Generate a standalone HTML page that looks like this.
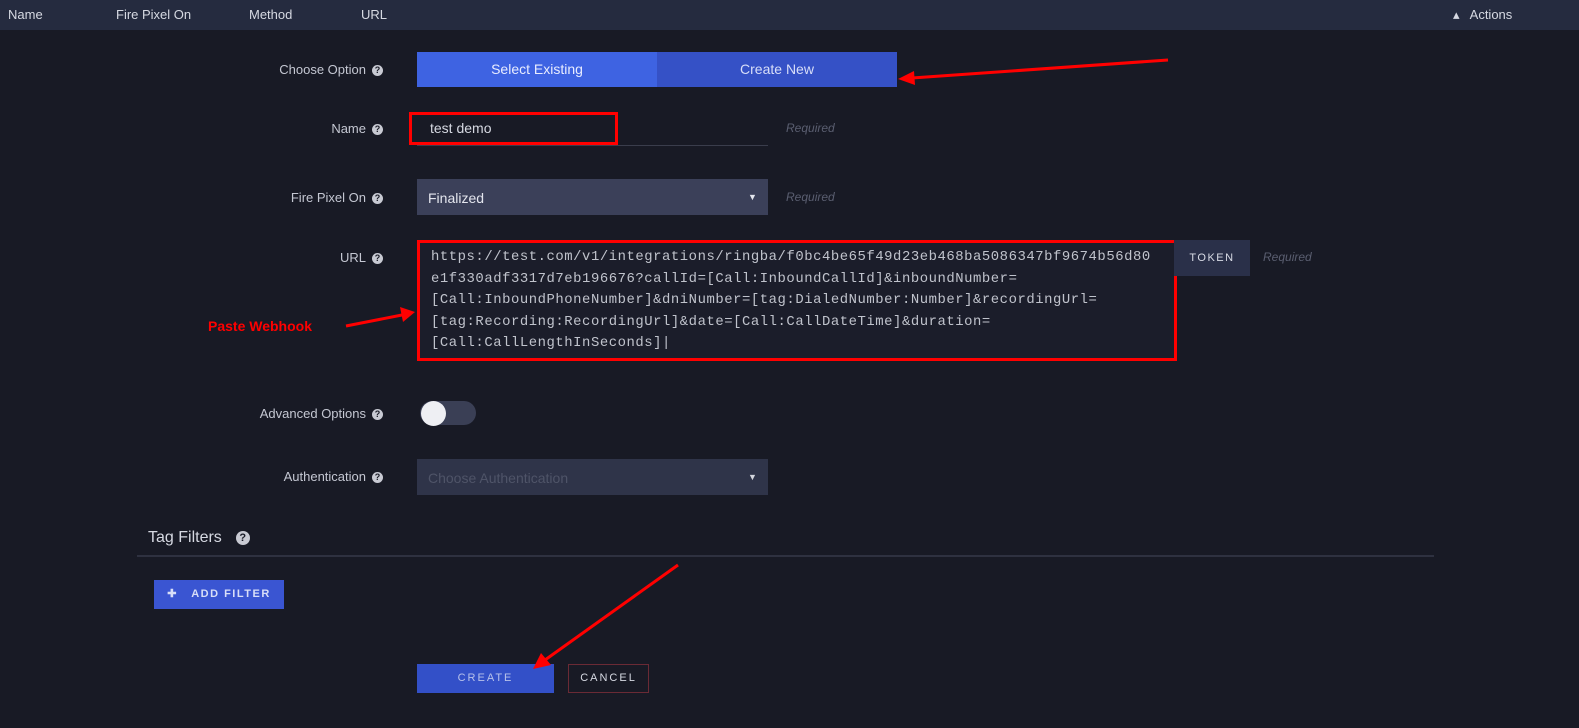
<!DOCTYPE html>
<html><head><style>
body{margin:0;width:1579px;height:728px;background:#181a25;font-family:"Liberation Sans",sans-serif;position:relative;overflow:hidden;color:#d0d3de}
.a{position:absolute}
.lbl{position:absolute;font-size:13px;color:#c4c7d2;text-align:right;width:300px}
.q{display:inline-block;width:11px;height:11px;border-radius:50%;background:#c8cad3;color:#181a25;font-size:9px;font-weight:bold;text-align:center;line-height:11px;margin-left:6px;vertical-align:1px}
.req{position:absolute;font-size:12px;font-style:italic;color:#5a5e70}
.mono{font-family:"Liberation Mono",monospace;font-size:13.9px;letter-spacing:0.55px;color:#c0c3cc;line-height:21.5px;white-space:nowrap}
</style></head><body>
<div class="a" style="left:0;top:0;width:1579px;height:30px;background:#252b3f"></div>
<div class="a" style="left:8px;top:7px;font-size:13px;color:#d6d9e2">Name</div>
<div class="a" style="left:116px;top:7px;font-size:13px;color:#d6d9e2">Fire Pixel On</div>
<div class="a" style="left:249px;top:7px;font-size:13px;color:#d6d9e2">Method</div>
<div class="a" style="left:361px;top:7px;font-size:13px;color:#d6d9e2">URL</div>
<div class="a" style="left:1453px;top:7px;font-size:13px;color:#d6d9e2">▴&nbsp;&nbsp; Actions</div>

<div class="lbl" style="left:83px;top:62px">Choose Option<span class="q">?</span></div>
<div class="a" style="left:417px;top:52px;width:240px;height:35px;background:#3e63e2;color:#e8ecff;font-size:14px;text-align:center;line-height:35px">Select Existing</div>
<div class="a" style="left:657px;top:52px;width:240px;height:35px;background:#3551c6;color:#d8def8;font-size:14px;text-align:center;line-height:35px">Create New</div>

<div class="lbl" style="left:83px;top:121px">Name<span class="q">?</span></div>
<div class="a" style="left:417px;top:145px;width:351px;height:1px;background:#3a3d4c"></div>
<div class="a" style="left:409px;top:112px;width:203px;height:27px;border:3px solid #f00"></div>
<div class="a" style="left:430px;top:120px;font-size:14px;color:#d6d9e2">test demo</div>
<div class="req" style="left:786px;top:121px">Required</div>

<div class="lbl" style="left:83px;top:190px">Fire Pixel On<span class="q">?</span></div>
<div class="a" style="left:417px;top:179px;width:351px;height:36px;background:#3b4059"></div>
<div class="a" style="left:428px;top:190px;font-size:14px;color:#e4e6ee">Finalized</div>
<div class="a" style="left:748px;top:192px;font-size:9px;color:#e4e6ee">▼</div>
<div class="req" style="left:786px;top:190px">Required</div>

<div class="lbl" style="left:83px;top:250px">URL<span class="q">?</span></div>
<div class="a" style="left:417px;top:240px;width:754px;height:115px;border:3px solid #f00;background:#1b1d2a"></div>
<div class="a mono" style="left:431px;top:247px">https://test.com/v1/integrations/ringba/f0bc4be65f49d23eb468ba5086347bf9674b56d80<br>e1f330adf3317d7eb196676?callId=[Call:InboundCallId]&amp;inboundNumber=<br>[Call:InboundPhoneNumber]&amp;dniNumber=[tag:DialedNumber:Number]&amp;recordingUrl=<br>[tag:Recording:RecordingUrl]&amp;date=[Call:CallDateTime]&amp;duration=<br>[Call:CallLengthInSeconds]|</div>
<div class="a" style="left:1174px;top:240px;width:76px;height:36px;background:#2a3049;color:#d8dbe5;font-size:11px;letter-spacing:1.5px;text-align:center;line-height:36px">TOKEN</div>
<div class="req" style="left:1263px;top:250px">Required</div>

<div class="a" style="left:208px;top:318px;font-size:14px;color:#f00;font-weight:bold">Paste Webhook</div>

<div class="lbl" style="left:83px;top:406px">Advanced Options<span class="q">?</span></div>
<div class="a" style="left:420px;top:401px;width:56px;height:24px;border-radius:12px;background:#3a3f55"></div>
<div class="a" style="left:421px;top:401px;width:25px;height:25px;border-radius:50%;background:#eeeff3"></div>

<div class="lbl" style="left:83px;top:469px">Authentication<span class="q">?</span></div>
<div class="a" style="left:417px;top:459px;width:351px;height:36px;background:#2f3449"></div>
<div class="a" style="left:428px;top:470px;font-size:14px;color:#4f5468">Choose Authentication</div>
<div class="a" style="left:748px;top:472px;font-size:9px;color:#d4d6de">▼</div>

<div class="a" style="left:148px;top:529px;font-size:16px;color:#d6d9e2">Tag Filters<span class="q" style="width:14px;height:14px;line-height:14px;font-size:11px;margin-left:14px">?</span></div>
<div class="a" style="left:137px;top:555px;width:1297px;height:2px;background:#2e3140"></div>
<div class="a" style="left:154px;top:580px;width:130px;height:29px;background:#3a55d2;color:#d8def8;font-size:11px;letter-spacing:1.5px;font-weight:bold;line-height:29px;text-align:center">✚&nbsp;&nbsp; ADD FILTER</div>

<div class="a" style="left:417px;top:664px;width:137px;height:29px;background:#3350c8;color:#b8c2ea;font-size:11px;letter-spacing:2px;line-height:29px;text-align:center">CREATE</div>
<div class="a" style="left:568px;top:664px;width:79px;height:27px;border:1px solid #6a2a35;color:#d6d9e2;font-size:11px;letter-spacing:2px;line-height:27px;text-align:center">CANCEL</div>

<svg class="a" style="left:0;top:0" width="1579" height="728">
<g stroke="#f00" stroke-width="3" fill="#f00">
<line x1="1168" y1="60" x2="912" y2="78"/>
<polygon points="898,79 914,71 915,85" stroke="none"/>
<line x1="346" y1="326" x2="402" y2="315"/>
<polygon points="415,312 400,307 403,322" stroke="none"/>
<line x1="678" y1="565" x2="545" y2="660"/>
<polygon points="533,669 541,653 551,665" stroke="none"/>
</g>
</svg>
</body></html>
